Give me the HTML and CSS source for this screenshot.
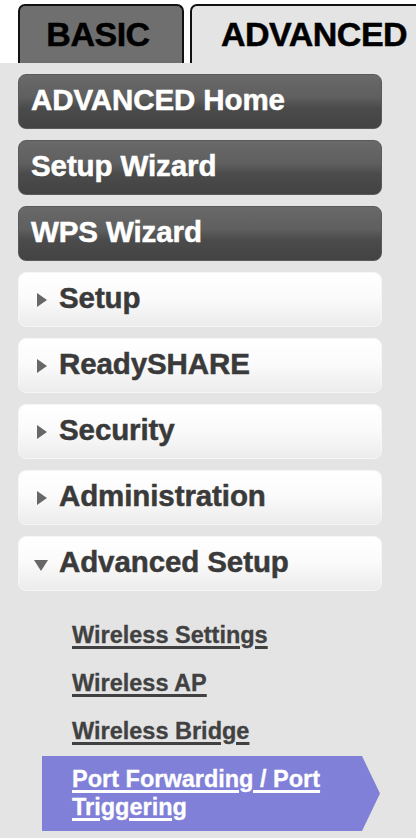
FILE: index.html
```html
<!DOCTYPE html>
<html lang="en">
<head>
<meta charset="utf-8">
<title>Advanced</title>
<link rel="stylesheet" href="styles.css">
</head>
<body>
<div class="tabs">
  <div class="tab tab-basic">BASIC</div>
  <div class="tab tab-adv">ADVANCED</div>
</div>
<nav class="panel">
  <a class="btn btn-dark" href="#">ADVANCED Home</a>
  <a class="btn btn-dark" href="#">Setup Wizard</a>
  <a class="btn btn-dark" href="#">WPS Wizard</a>
  <a class="btn btn-light" href="#"><span class="arrow arrow-right"></span>Setup</a>
  <a class="btn btn-light" href="#"><span class="arrow arrow-right"></span>ReadySHARE</a>
  <a class="btn btn-light" href="#"><span class="arrow arrow-right"></span>Security</a>
  <a class="btn btn-light" href="#"><span class="arrow arrow-right"></span>Administration</a>
  <a class="btn btn-light" href="#"><span class="arrow arrow-down"></span>Advanced Setup</a>
  <ul class="submenu">
    <li><a href="#">Wireless Settings</a></li>
    <li><a href="#">Wireless AP</a></li>
    <li><a href="#">Wireless Bridge</a></li>
    <li class="active"><a href="#">Port Forwarding / Port Triggering</a></li>
  </ul>
</nav>
</body>
</html>
```
FILE: styles.css
```css
* { box-sizing: border-box; }
html, body {
  margin: 0;
  padding: 0;
}
body {
  width: 416px;
  height: 838px;
  overflow: hidden;
  background: #e4e4e4;
  font-family: "Liberation Sans", Arial, Helvetica, sans-serif;
  font-weight: bold;
}
.tabs {
  display: flex;
  gap: 6px;
  height: 63px;
  padding: 4px 0 0 18px;
  background: #ffffff;
  overflow: hidden;
}
.tab {
  flex: none;
  height: 59px;
  border: 2px solid #111;
  border-bottom: none;
  border-radius: 7px 7px 0 0;
  font-size: 34px;
  letter-spacing: -0.5px;
  color: #000;
  line-height: 56px;
  -webkit-text-stroke: 0.5px #000;
}
.tab-basic {
  width: 166px;
  background: #6f6f6f;
  text-align: center;
  padding-right: 6px;
}
.tab-adv {
  width: 260px;
  background: #e4e4e4;
  padding-left: 29px;
}
.panel {
  display: flex;
  flex-direction: column;
  gap: 11px;
  padding: 11px 0 0 18px;
}
.btn {
  display: flex;
  align-items: center;
  width: 364px;
  height: 55px;
  border-radius: 8px;
  font-size: 29.5px;
  letter-spacing: -0.1px;
  text-decoration: none;
  padding-bottom: 3px;
  -webkit-text-stroke: 0.5px currentColor;
}
.btn-dark {
  color: #fff;
  padding-left: 12px;
  background: linear-gradient(to bottom, #696969 0%, #5f5f5f 42%, #4b4b4b 62%, #434343 100%);
  border: 1px solid #5a5a5a;
}
.btn-light {
  color: #3a3a3a;
  padding-left: 17px;
  background: linear-gradient(to bottom, #ffffff 0%, #fbfbfb 45%, #ececec 100%);
  border: 1px solid #f6f6f6;
}
.arrow {
  display: inline-block;
  flex: none;
  width: 0;
  height: 0;
  -webkit-text-stroke: 0;
}
.arrow-right {
  border-top: 7px solid transparent;
  border-bottom: 7px solid transparent;
  border-left: 10px solid #676767;
  margin: 3px 12px 0 1px;
}
.arrow-down {
  border-left: 7px solid transparent;
  border-right: 7px solid transparent;
  border-top: 11px solid #676767;
  margin: 6px 11px 0 -2px;
}
.submenu {
  list-style: none;
  margin: 9px 0 0 0;
  padding: 0;
  font-size: 23.5px;
}
.submenu li {
  line-height: 48px;
  padding-left: 54px;
}
.submenu a {
  color: #414141;
  text-decoration: underline;
  text-decoration-thickness: 3px;
  text-underline-offset: 3px;
  -webkit-text-stroke: 0.3px currentColor;
}
.submenu li.active {
  margin: 1px 0 0 24px;
  width: 338px;
  height: 75px;
  padding: 9px 40px 0 30px;
  line-height: 28px;
  background: #8080d8;
  clip-path: polygon(0 0, 320px 0, 338px 50%, 320px 100%, 0 100%);
}
.submenu li.active a {
  color: #fff;
}
```
